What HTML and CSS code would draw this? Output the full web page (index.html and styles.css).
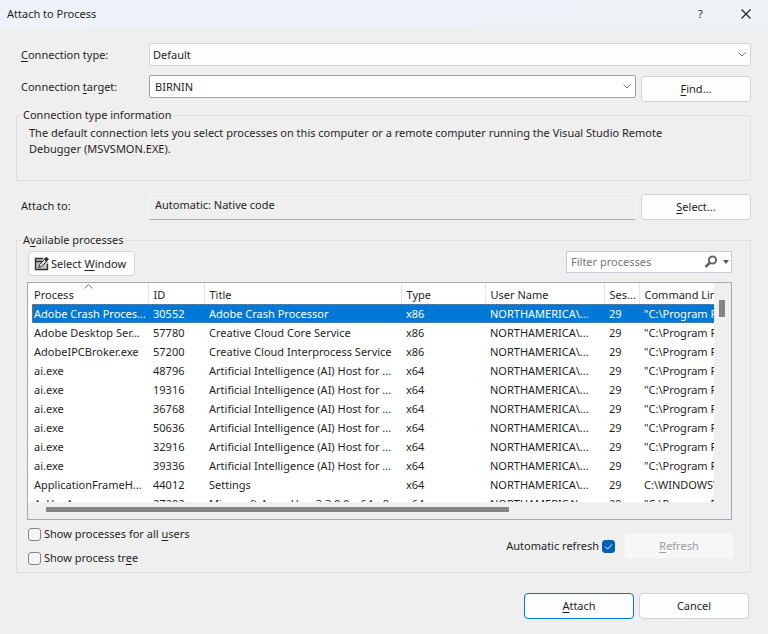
FILE: index.html
```html
<!DOCTYPE html>
<html lang="en">
<head>
    <meta charset="UTF-8">
    <meta name="viewport" content="width=device-width, initial-scale=1.0">
    <title>Attach to Process</title>
    <link rel="stylesheet" href="styles.css">
</head>
<body>
    <header class="titlebar">
        <h1>Attach to Process</h1>
        <button type="button" class="caption-btn" aria-label="Help">?</button>
        <button type="button" class="caption-btn" aria-label="Close">
            <svg width="12" height="12" viewBox="0 0 12 12"><path d="M1.5 1.5l9 9M10.5 1.5l-9 9" fill="none" stroke="#222" stroke-width="1.2"/></svg>
        </button>
    </header>
    <form class="dialog">
        <div class="connection">
            <label for="connType"><u>C</u>onnection type:</label>
            <select id="connType" class="combo combo-type">
                <option>Default</option>
            </select>
            <label for="connTarget">Connection <u>t</u>arget:</label>
            <select id="connTarget" class="combo combo-target">
                <option>BIRNIN</option>
            </select>
            <button type="button" class="btn btn-find"><u>F</u>ind...</button>
        </div>
        <fieldset class="group info">
            <legend>Connection type information</legend>
            <p>The default connection lets you select processes on this computer or a remote computer running the Visual Studio Remote Debugger (MSVSMON.EXE).</p>
        </fieldset>
        <div class="attach-to">
            <label for="attachTo">Attach to:</label>
            <input type="text" id="attachTo" class="code-type" value="Automatic: Native code" readonly>
            <button type="button" class="btn"><u>S</u>elect...</button>
        </div>
        <fieldset class="group processes">
            <legend>A<u>v</u>ailable processes</legend>
            <div class="toolbar">
                <button type="button" class="btn btn-window">
                    <svg width="16" height="16" viewBox="0 0 16 16">
                        <path d="M1 2h13v12H1z" fill="#c4c4c4"/>
                        <path d="M9 2.5H1.5v11h12V8M1.5 5.5H8" fill="none" stroke="#303030" stroke-width="1.4"/>
                        <path d="M4.5 11.5l1-3L10.5 3.5l2 2L7.5 10.5z" fill="#d8d8d8" stroke="#303030"/>
                        <path d="M10 3l2.5-2.3L15 3.3 12.5 5.5z" fill="#303030"/>
                    </svg>
                    <span>Select <u>W</u>indow</span>
                </button>
                <div class="filter">
                    <input type="text" placeholder="Filter processes" aria-label="Filter processes">
                    <svg width="14" height="14" viewBox="0 0 14 14"><circle cx="8.5" cy="5" r="3.6" fill="none" stroke="#666" stroke-width="2"/><path d="M6 7.5L1.5 12" stroke="#666" stroke-width="2.6"/></svg>
                    <button type="button" aria-label="Filter options"><svg width="6" height="4" viewBox="0 0 6 4"><path d="M0 0h6L3 4z" fill="#555"/></svg></button>
                </div>
            </div>
            <div class="list">
                <div class="view">
                    <table>
                        <colgroup>
                            <col class="c-process"><col class="c-id"><col class="c-title"><col class="c-type"><col class="c-user"><col class="c-session"><col class="c-command">
                        </colgroup>
                        <thead>
                            <tr>
                                <th class="sorted">Process<svg width="9" height="5" viewBox="0 0 9 5"><path d="M.5 4.5l4-4 4 4" fill="none" stroke="#777"/></svg></th>
                                <th>ID</th><th>Title</th><th>Type</th><th>User Name</th><th>Ses...</th><th>Command Line</th>
                            </tr>
                        </thead>
                        <tbody>
                            <tr class="selected"><td>Adobe Crash Proces...</td><td>30552</td><td>Adobe Crash Processor</td><td>x86</td><td>NORTHAMERICA\...</td><td>29</td><td>"C:\Program Files</td></tr>
                            <tr><td>Adobe Desktop Ser...</td><td>57780</td><td>Creative Cloud Core Service</td><td>x86</td><td>NORTHAMERICA\...</td><td>29</td><td>"C:\Program Files</td></tr>
                            <tr><td>AdobeIPCBroker.exe</td><td>57200</td><td>Creative Cloud Interprocess Service</td><td>x86</td><td>NORTHAMERICA\...</td><td>29</td><td>"C:\Program Files</td></tr>
                            <tr><td>ai.exe</td><td>48796</td><td>Artificial Intelligence (AI) Host for ...</td><td>x64</td><td>NORTHAMERICA\...</td><td>29</td><td>"C:\Program Files</td></tr>
                            <tr><td>ai.exe</td><td>19316</td><td>Artificial Intelligence (AI) Host for ...</td><td>x64</td><td>NORTHAMERICA\...</td><td>29</td><td>"C:\Program Files</td></tr>
                            <tr><td>ai.exe</td><td>36768</td><td>Artificial Intelligence (AI) Host for ...</td><td>x64</td><td>NORTHAMERICA\...</td><td>29</td><td>"C:\Program Files</td></tr>
                            <tr><td>ai.exe</td><td>50636</td><td>Artificial Intelligence (AI) Host for ...</td><td>x64</td><td>NORTHAMERICA\...</td><td>29</td><td>"C:\Program Files</td></tr>
                            <tr><td>ai.exe</td><td>32916</td><td>Artificial Intelligence (AI) Host for ...</td><td>x64</td><td>NORTHAMERICA\...</td><td>29</td><td>"C:\Program Files</td></tr>
                            <tr><td>ai.exe</td><td>39336</td><td>Artificial Intelligence (AI) Host for ...</td><td>x64</td><td>NORTHAMERICA\...</td><td>29</td><td>"C:\Program Files</td></tr>
                            <tr><td>ApplicationFrameH...</td><td>44012</td><td>Settings</td><td>x64</td><td>NORTHAMERICA\...</td><td>29</td><td>C:\WINDOWS\system32</td></tr>
                            <tr><td>AsHosAge.exe</td><td>27292</td><td>Microsoft.AsyncHos_3.3.0.0_x64__8</td><td>x64</td><td>NORTHAMERICA\...</td><td>29</td><td>"C:\Program Files</td></tr>
                        </tbody>
                    </table>
                </div>
                <div class="scroll-y"><div class="thumb"></div></div>
                <div class="scroll-x"><div class="thumb"></div></div>
            </div>
            <div class="options">
                <div class="checks">
                    <label><input type="checkbox"><span>Show processes for all <u>u</u>sers</span></label>
                    <label><input type="checkbox"><span>Show process tr<u>e</u>e</span></label>
                </div>
                <label><span>Automatic refresh</span><input type="checkbox" checked></label>
                <button type="button" class="btn" disabled><u>R</u>efresh</button>
            </div>
        </fieldset>
        <div class="actions">
            <button type="submit" class="btn btn-default"><u>A</u>ttach</button>
            <button type="button" class="btn">Cancel</button>
        </div>
    </form>
</body>
</html>
```
FILE: styles.css
```css
* {
    box-sizing: border-box;
}
body {
    margin: 0;
    background-color: #efefef;
    color: #1f1f1f;
    font: 11px/16px "Noto Sans", "Open Sans", sans-serif;
}
button, input, select {
    font: inherit;
    color: inherit;
}
u {
    text-underline-offset: 2px;
}
.titlebar {
    display: flex;
    align-items: center;
    height: 28px;
    padding-left: 7px;
    background: linear-gradient(90deg, #eef3fb, #edf2f6);
}
.titlebar h1 {
    flex: 1;
    margin: 0;
    font-size: 11px;
    font-weight: normal;
}
.caption-btn {
    width: 45px;
    height: 28px;
    padding: 0;
    border: none;
    background: none;
}
.caption-btn svg {
    display: block;
    margin: 0 auto;
}
.dialog {
    padding: 15px 17px 15px 16px;
}
.connection {
    display: grid;
    grid-template-columns: 128px 1fr 110px;
    column-gap: 5px;
    row-gap: 9px;
    align-items: start;
}
.connection label, .attach-to label {
    padding: 4px 0 0 5px;
}
.combo {
    appearance: none;
    width: 100%;
    height: 23px;
    padding: 0 20px 0 3px;
    border: 1px solid #d4d4d4;
    border-radius: 2px;
    background: #fdfdfd url("data:image/svg+xml,%3Csvg xmlns='http://www.w3.org/2000/svg' width='8' height='5'%3E%3Cpath d='M.5.5L4 4 7.5.5' fill='none' stroke='%23777'/%3E%3C/svg%3E") no-repeat right 4px center;
}
.combo-type {
    grid-column: 2 / 4;
}
.combo-target {
    padding-left: 5px;
    border-color: #a0a0a0;
    background-color: #fff;
}
.btn {
    width: 110px;
    height: 26px;
    padding: 0;
    border: 1px solid #d3d3d3;
    border-radius: 4px;
    background-color: #fdfdfd;
}
.btn:disabled {
    border-color: #f4f4f4;
    background-color: #f7f7f7;
    color: #9c9c9c;
}
.btn-default {
    border-color: #0078d4;
}
.btn-find {
    margin-top: 1px;
}
.group {
    min-width: 0;
    margin: 0;
    border: 1px solid #dfdfdf;
}
.group legend {
    padding: 0 2px;
}
.info {
    height: 74px;
    margin-top: 5px;
    padding: 2px 50px 0 12px;
}
.info legend {
    margin-left: -8px;
}
.info p {
    margin: 0;
}
.attach-to {
    display: grid;
    grid-template-columns: 128px 1fr 110px;
    column-gap: 5px;
    margin-top: 13px;
}
.code-type {
    min-width: 0;
    height: 26px;
    padding: 0 5px 5px;
    border: 1px solid #f5f5f5;
    border-bottom: 1px solid #adadad;
    background: none;
}
.processes {
    margin-top: 12px;
    padding: 3px 16px 6px 11px;
}
.processes legend {
    margin-left: -7px;
}
.toolbar {
    display: flex;
    justify-content: space-between;
    align-items: flex-start;
    height: 31px;
    margin-right: 2px;
}
.btn-window {
    display: flex;
    align-items: center;
    gap: 1px;
    width: 107px;
    height: 25px;
    padding-left: 5px;
}
.filter {
    display: flex;
    align-items: center;
    width: 166px;
    height: 22px;
    border: 1px solid #c9c9d6;
    background-color: #fff;
}
.filter input {
    flex: 1;
    min-width: 0;
    padding: 0 4px;
    border: none;
    background: none;
}
.filter input::placeholder {
    color: #767676;
}
.filter button {
    display: flex;
    padding: 0;
    margin: 0 2px 0 5px;
    border: none;
    background: none;
}
.list {
    display: grid;
    grid-template-columns: 1fr 17px;
    grid-template-rows: 219px 17px;
    margin: 0 2px 0 -1px;
    border: 1px solid #a8a8b0;
    background-color: #efefef;
}
.view {
    padding: 0 0 0 4px;
    overflow: hidden;
    background-color: #fff;
}
table {
    width: 740px;
    table-layout: fixed;
    border-collapse: collapse;
}
.c-process {
    width: 116px;
}
.c-id {
    width: 56px;
}
.c-title {
    width: 197px;
}
.c-type {
    width: 84px;
}
.c-user {
    width: 119px;
}
.c-session {
    width: 35px;
}
th, td {
    height: 19px;
    padding: 0 0 0 5px;
    overflow: hidden;
    font-weight: normal;
    text-align: left;
    text-overflow: ellipsis;
    white-space: nowrap;
}
th:first-child, td:first-child {
    padding-left: 2px;
}
th {
    position: relative;
    height: 21px;
    padding-top: 2px;
    border-right: 1px solid #e5e5e5;
}
.sorted svg {
    position: absolute;
    top: 1px;
    left: 45%;
}
.selected {
    background-color: #0078d7;
    color: #fff;
    outline: 1px dotted #8a8078;
    outline-offset: -1px;
}
.scroll-y {
    padding: 17px 6px 0 5px;
}
.scroll-y .thumb {
    height: 17px;
    background-color: #858585;
}
.scroll-x {
    padding: 5px 205px 0 18px;
}
.scroll-x .thumb {
    height: 5px;
    background-color: #858585;
}
.options {
    display: flex;
    align-items: center;
    padding-top: 6px;
}
.options label {
    display: flex;
    align-items: center;
    gap: 3px;
}
.options .btn {
    margin-left: 9px;
}
.checks {
    display: flex;
    flex: 1;
    flex-direction: column;
    gap: 8px;
}
input[type="checkbox"] {
    appearance: none;
    width: 13px;
    height: 13px;
    margin: 0;
    border: 1px solid #858585;
    border-radius: 3px;
    background-color: #f6f6f6;
}
input[type="checkbox"]:checked {
    border-color: #005fb8;
    background: #005fb8 url("data:image/svg+xml,%3Csvg xmlns='http://www.w3.org/2000/svg' width='9' height='7'%3E%3Cpath d='M1 3.5l2.5 2.5L8 1.5' fill='none' stroke='%23fff'/%3E%3C/svg%3E") no-repeat center;
}
.actions {
    display: flex;
    justify-content: flex-end;
    gap: 5px;
    margin-top: 20px;
    padding-right: 2px;
}
```
